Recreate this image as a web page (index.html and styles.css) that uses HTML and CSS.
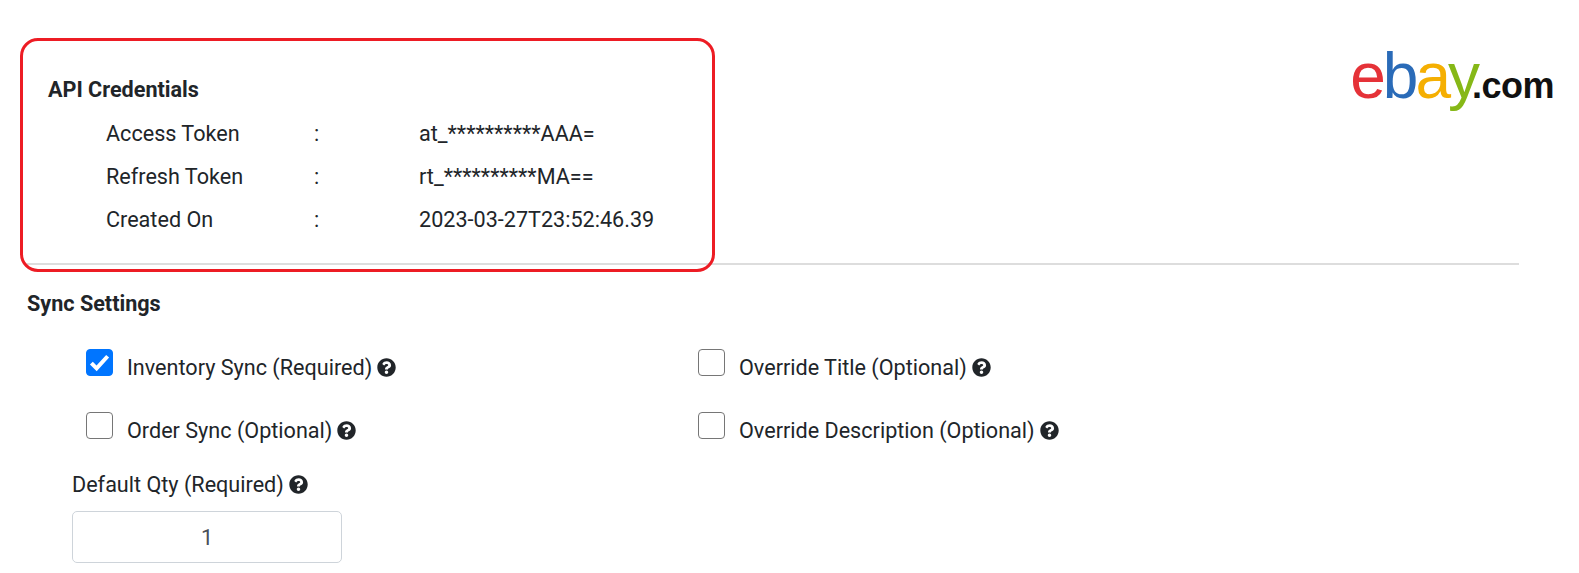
FILE: index.html
```html
<!DOCTYPE html>
<html lang="en">
<head>
<meta charset="UTF-8" />
<title>eBay Settings</title>
<link rel="stylesheet" href="styles.css">
</head>
<body>

<svg class="icon-defs" width="0" height="0">
  <symbol id="help" viewBox="0 0 512 512">
    <path d="M504 256c0 136.997-111.043 248-248 248S8 392.997 8 256C8 119.083 119.043 8 256 8s248 111.083 248 248zM262.655 90c-54.497 0-89.255 22.957-116.549 63.758-3.536 5.286-2.353 12.415 2.715 16.258l34.699 26.31c5.205 3.947 12.621 3.008 16.665-2.122 17.864-22.658 30.113-35.797 57.303-35.797 20.429 0 45.698 13.148 45.698 32.958 0 14.976-12.363 22.667-32.534 33.976C247.128 238.528 216 254.941 216 296v4c0 6.627 5.373 12 12 12h56c6.627 0 12-5.373 12-12v-1.333c0-28.462 83.186-29.647 83.186-106.667 0-58.002-60.165-102-116.531-102zM256 338c-25.365 0-46 20.635-46 46 0 25.364 20.635 46 46 46s46-20.636 46-46c0-25.365-20.635-46-46-46z"/>
  </symbol>
</svg>

<div class="page">
  <!-- Red highlight drawn over the credentials -->
  <div class="highlight"></div>

  <header class="top">
    <section class="credentials">
      <h2>API Credentials</h2>
      <div class="cred-row"><span class="cred-key">Access Token</span><span class="cred-sep">:</span><span>at_**********AAA=</span></div>
      <div class="cred-row"><span class="cred-key">Refresh Token</span><span class="cred-sep">:</span><span>rt_**********MA==</span></div>
      <div class="cred-row"><span class="cred-key">Created On</span><span class="cred-sep">:</span><span>2023-03-27T23:52:46.39</span></div>
    </section>
    <div class="logo"><span class="e">e</span><span class="b">b</span><span class="a">a</span><span class="y">y</span><span class="dotcom">.com</span></div>
  </header>

  <section class="sync">
    <h2>Sync Settings</h2>
    <div class="options">
      <label class="option"><span class="box checked"><svg viewBox="0 0 20 20"><path d="M3.5 10.5l4.2 4.2 8.8-9.7" fill="none" stroke="#fff" stroke-width="3.2"/></svg></span>Inventory Sync (Required)<svg class="help"><use href="#help"/></svg></label>
      <label class="option"><span class="box"></span>Override Title (Optional)<svg class="help"><use href="#help"/></svg></label>
      <label class="option"><span class="box"></span>Order Sync (Optional)<svg class="help"><use href="#help"/></svg></label>
      <label class="option"><span class="box"></span>Override Description (Optional)<svg class="help"><use href="#help"/></svg></label>
    </div>
    <div class="qty">
      <label>Default Qty (Required)<svg class="help"><use href="#help"/></svg></label>
      <div class="qty-input">1</div>
    </div>
  </section>
</div>

</body>
</html>
```

FILE: styles.css
```css
body {
  margin: 0;
  background: #fff;
  color: #212529;
  font-family: Roboto, "Liberation Sans", sans-serif;
  font-size: 21.6px;
  overflow: hidden;
}
.icon-defs {
  position: absolute;
}
.page {
  position: relative;
  height: 573px;
  padding: 0 60px 0 27px;
  box-sizing: border-box;
}
.highlight {
  position: absolute;
  left: 20px;
  top: 38px;
  width: 689px;
  height: 228px;
  border: 3px solid #ed1c24;
  border-radius: 18px;
}
.top {
  display: flex;
  justify-content: space-between;
  height: 263px;
  border-bottom: 2px solid #ddd;
  box-sizing: content-box;
}
h2 {
  margin: 0;
  font-size: 21.6px;
  font-weight: 700;
  line-height: 24px;
}
.credentials {
  padding: 78px 0 0 21px;
}
.credentials h2 {
  margin-bottom: 10px;
}
.cred-row {
  display: flex;
  height: 43px;
  align-items: center;
  padding-left: 58px;
}
.cred-key {
  width: 208px;
}
.cred-sep {
  width: 105px;
}
.logo {
  margin: 39px -35px 0 0;
  font-family: "Liberation Sans", sans-serif;
  font-size: 64px;
  line-height: 74px;
  letter-spacing: -3px;
}
.logo .e { color: #e53238; }
.logo .b { color: #2a6bb8; }
.logo .a { color: #f5af02; }
.logo .y {
  color: #86b817;
  letter-spacing: -8px;
}
.logo .dotcom {
  color: #111;
  font-size: 36px;
  font-weight: 700;
  letter-spacing: -0.5px;
}
.sync {
  padding-top: 27px;
}
.options {
  display: grid;
  grid-template-columns: 612px auto;
  row-gap: 36px;
  margin: 38px 0 0 59px;
}
.option {
  display: flex;
  align-items: center;
  height: 27px;
}
.box {
  width: 27px;
  height: 27px;
  box-sizing: border-box;
  border: 1px solid #767676;
  border-radius: 4px;
  margin-right: 14px;
  position: relative;
  top: -5px;
}
.box.checked {
  background: #0075ff;
  border-color: #0075ff;
}
.box svg {
  display: block;
}
.help {
  width: 19px;
  height: 19px;
  margin-left: 5px;
  fill: #212529;
}
.qty {
  margin: 28px 0 0 45px;
}
.qty label {
  display: flex;
  align-items: center;
  height: 24px;
}
.qty-input {
  width: 270px;
  height: 52px;
  margin-top: 15px;
  box-sizing: border-box;
  border: 1px solid #ced4da;
  border-radius: 5px;
  color: #495057;
  text-align: center;
  line-height: 52px;
}
```
